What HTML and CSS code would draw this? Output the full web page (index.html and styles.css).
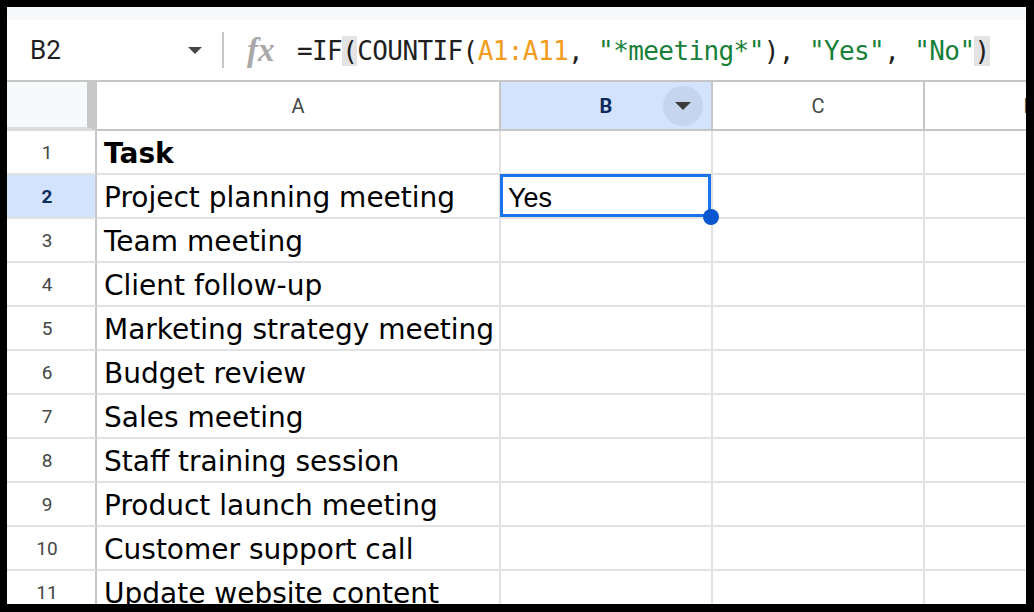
FILE: index.html
```html
<!DOCTYPE html>
<html>
<head>
<meta charset="utf-8">
<link rel="stylesheet" href="styles.css">
</head>
<body>
<div class="frame">
  <div class="app">
    <div class="strip"></div>
    <div class="fbar">
      <div class="namebox"><span class="ref">B2</span><span class="caret"></span></div>
      <div class="sep"></div>
      <div class="fx">fx</div>
      <div class="formula">=IF<span class="hl">(</span>COUNTIF(<span class="rng">A1:A11</span>, <span class="str">"*meeting*"</span>), <span class="str">"Yes"</span>, <span class="str">"No"</span><span class="hl">)</span></div>
    </div>
    <div class="sheet">
      <div class="corner"></div>
      <div class="ch">A</div>
      <div class="ch ch-sel">B<span class="colmenu"><span class="caret"></span></span></div>
      <div class="ch">C</div>
      <div class="ch">D</div>

      <div class="rh">1</div><div class="c bold">Task</div><div class="c"></div><div class="c"></div><div class="c"></div>
      <div class="rh rh-sel">2</div><div class="c">Project planning meeting</div><div class="c c-sel yes">Yes<span class="selbox"></span><span class="handle"></span></div><div class="c"></div><div class="c"></div>
      <div class="rh">3</div><div class="c">Team meeting</div><div class="c"></div><div class="c"></div><div class="c"></div>
      <div class="rh">4</div><div class="c">Client follow-up</div><div class="c"></div><div class="c"></div><div class="c"></div>
      <div class="rh">5</div><div class="c">Marketing strategy meeting</div><div class="c"></div><div class="c"></div><div class="c"></div>
      <div class="rh">6</div><div class="c">Budget review</div><div class="c"></div><div class="c"></div><div class="c"></div>
      <div class="rh">7</div><div class="c">Sales meeting</div><div class="c"></div><div class="c"></div><div class="c"></div>
      <div class="rh">8</div><div class="c">Staff training session</div><div class="c"></div><div class="c"></div><div class="c"></div>
      <div class="rh">9</div><div class="c">Product launch meeting</div><div class="c"></div><div class="c"></div><div class="c"></div>
      <div class="rh">10</div><div class="c">Customer support call</div><div class="c"></div><div class="c"></div><div class="c"></div>
      <div class="rh">11</div><div class="c">Update website content</div><div class="c"></div><div class="c"></div><div class="c"></div>
    </div>
  </div>
</div>
</body>
</html>
```

FILE: styles.css
```css
html, body {
  margin: 0;
  padding: 0;
  background: #000;
}
.frame {
  width: 1034px;
  height: 612px;
  box-sizing: border-box;
  padding: 7px 8px 8px 7px;
  background: #000;
}
.app {
  width: 1019px;
  height: 597px;
  background: #fff;
  overflow: hidden;
  display: flex;
  flex-direction: column;
}
.strip {
  height: 13px;
  flex: none;
  background: #f8f9fb;
}
.fbar {
  height: 60px;
  flex: none;
  display: flex;
  align-items: center;
}
.namebox {
  width: 215px;
  box-sizing: border-box;
  padding: 0 20px 0 23px;
  display: flex;
  align-items: center;
  justify-content: space-between;
}
.ref {
  font-family: Roboto, "Liberation Sans", sans-serif;
  font-size: 26px;
  color: #1f1f1f;
}
.caret {
  width: 0;
  height: 0;
  border-left: 7px solid transparent;
  border-right: 7px solid transparent;
  border-top: 7px solid #444746;
}
.sep {
  width: 2px;
  height: 36px;
  background: #c4c7c5;
  flex: none;
}
.fx {
  margin-left: 23px;
  width: 31px;
  font-family: "Liberation Serif", serif;
  font-style: italic;
  font-weight: bold;
  font-size: 33px;
  color: #a8a8a8;
  line-height: 1;
}
.formula {
  margin-left: 19px;
  padding-top: 2px;
  font-family: "DejaVu Sans Mono", monospace;
  font-size: 26px;
  letter-spacing: -0.6px;
  color: #1f1f1f;
  white-space: pre;
  line-height: 30px;
}
.hl {
  background: #e3e3e3;
}
.rng { color: #f29d1e; }
.str { color: #188038; }

.sheet {
  display: grid;
  grid-template-columns: 90px 404px 212px 212px 212px;
  grid-template-rows: 51px;
  grid-auto-rows: 44px;
}
.corner {
  background: #f8f9fa;
  border-top: 2px solid #c4c7c5;
  border-right: 10px solid #c7c7c7;
  border-bottom: 4px solid #dadce0;
  box-sizing: border-box;
}
.ch {
  box-sizing: border-box;
  border-top: 2px solid #c4c7c5;
  border-bottom: 2px solid #c4c7c5;
  border-right: 2px solid #c4c7c5;
  display: flex;
  align-items: center;
  justify-content: center;
  font-family: Roboto, "Liberation Sans", sans-serif;
  font-size: 20px;
  color: #444746;
  position: relative;
}
.ch-sel {
  background: #d3e3fd;
  color: #0b2b5c;
  font-weight: bold;
}
.colmenu {
  position: absolute;
  right: 8px;
  top: 4px;
  width: 40px;
  height: 40px;
  border-radius: 50%;
  background: #c5d5ee;
  display: flex;
  align-items: center;
  justify-content: center;
}
.colmenu .caret {
  border-left-width: 8px;
  border-right-width: 8px;
  border-top-width: 8px;
  border-top-color: #3c3c3c;
}
.rh {
  box-sizing: border-box;
  border-right: 2px solid #c4c7c5;
  border-bottom: 2px solid #e2e2e2;
  padding-right: 8px;
  display: flex;
  align-items: center;
  justify-content: center;
  font-family: Roboto, "Liberation Sans", sans-serif;
  font-size: 19px;
  color: #444746;
}
.rh-sel {
  background: #d3e3fd;
  color: #0b2b5c;
  font-weight: bold;
}
.c {
  box-sizing: border-box;
  border-right: 2px solid #e2e2e2;
  border-bottom: 2px solid #e2e2e2;
  padding: 2px 0 0 7px;
  display: flex;
  align-items: center;
  font-family: "DejaVu Sans", Verdana, sans-serif;
  font-size: 28px;
  color: #000;
  white-space: nowrap;
  position: relative;
}
.bold { font-weight: bold; }
.yes {
  font-family: "Liberation Sans", Arial, sans-serif;
  font-size: 27px;
  padding-top: 4px;
}
.selbox {
  position: absolute;
  left: -1px;
  top: -1px;
  right: 0;
  bottom: 0;
  border: 3px solid #1a73e8;
}
.handle {
  position: absolute;
  right: -8px;
  bottom: -8px;
  width: 16px;
  height: 16px;
  border-radius: 50%;
  background: #0b57d0;
  z-index: 2;
}
```
